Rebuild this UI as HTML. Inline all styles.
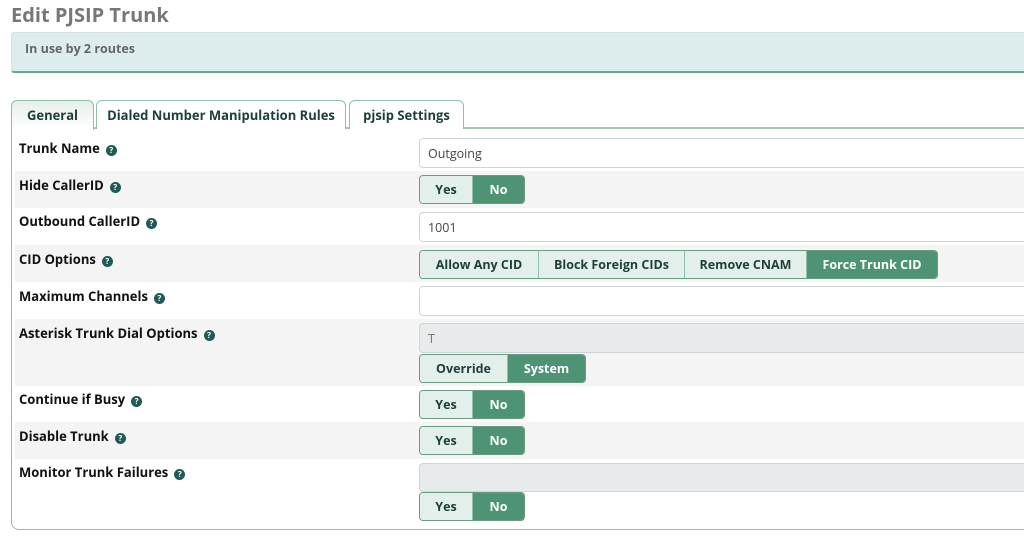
<!DOCTYPE html>
<html><head><meta charset="utf-8"><style>
*{box-sizing:border-box;margin:0;padding:0}
body{width:1024px;height:554px;overflow:hidden;background:#fff;font-family:"Open Sans","Liberation Sans",sans-serif;position:relative}
.a{position:absolute}
.title{left:11px;top:1px;font-size:20px;font-weight:bold;color:#777}
.alert{left:11px;top:32px;width:1020px;height:41px;background:#ddecec;border:1px solid #d6e2e2;border-bottom:2px solid #6aa988;border-radius:3px 0 0 3px}
.alert span{position:absolute;left:13px;top:7px;font-size:12.5px;font-weight:bold;color:#666}
.tab{top:100px;height:29px;border:1px solid #8fbfa6;border-bottom:none;border-radius:6px 6px 0 0;font-size:13px;font-weight:bold;color:#1d3e3a;text-align:center;line-height:29px;background:#fff}
.tab.act{background:linear-gradient(#e6efea,#fff);height:30px}
.line{left:93px;top:127px;width:940px;height:2px;background:#a3c9b5}
.panel{left:11px;top:127px;width:1030px;height:403px;border:1px solid #8fbfa6;border-top:none;border-radius:0 0 0 8px}
.row{left:15px;width:1010px}
.g{background:#f4f4f4}
.lbl{position:absolute;left:4px;top:4px;font-size:13px;font-weight:bold;color:#111}
.q{display:inline-block;width:11px;height:11px;border-radius:50%;background:#1f5a55;color:#fff;font-size:8px;line-height:11px;text-align:center;margin-left:6px;vertical-align:0}
.in{left:419px;width:620px;height:30px;border:1px solid #cfd4d6;border-radius:4px;background:#fff;font-size:12.5px;color:#444;padding:8px 8px;line-height:13px}
.in.d{background:#e8ebec}
.bg{display:flex;left:419px;height:29px;border:1px solid #6a9c82;border-radius:4px;overflow:hidden}
.bg div{font-size:12.5px;font-weight:bold;color:#1d3e3a;background:#e3efea;line-height:27px;text-align:center;border-right:1px solid #8fbfa6}
.bg div.on{background:#4e9373;color:#fff;border-right:none}
</style></head><body>
<div class="a title">Edit PJSIP Trunk</div>
<div class="a alert"><span>In use by 2 routes</span></div>
<div class="a line"></div>
<div class="a tab act" style="left:11px;width:83px">General</div>
<div class="a tab" style="left:96px;width:250px">Dialed Number Manipulation Rules</div>
<div class="a tab" style="left:349px;width:115px">pjsip Settings</div>
<div class="a panel"></div>

<div class="a row" style="top:135px;height:36px"><div class="lbl">Trunk Name<span class="q">?</span></div></div>
<div class="a in" style="top:138px">Outgoing</div>

<div class="a row g" style="top:171px;height:37px"><div class="lbl" style="top:5px">Hide CallerID<span class="q">?</span></div></div>
<div class="a bg" style="top:175px"><div style="width:53px">Yes</div><div class="on" style="width:51px">No</div></div>

<div class="a row" style="top:208px;height:37px"><div class="lbl">Outbound CallerID<span class="q">?</span></div></div>
<div class="a in" style="top:212px">1001</div>

<div class="a row g" style="top:245px;height:37px"><div class="lbl" style="top:5px">CID Options<span class="q">?</span></div></div>
<div class="a bg" style="top:250px"><div style="width:119px">Allow Any CID</div><div style="width:146px">Block Foreign CIDs</div><div style="width:122px">Remove CNAM</div><div class="on" style="width:130px">Force Trunk CID</div></div>

<div class="a row" style="top:282px;height:37px"><div class="lbl" style="top:5px">Maximum Channels<span class="q">?</span></div></div>
<div class="a in" style="top:286px"></div>

<div class="a row g" style="top:319px;height:67px"><div class="lbl" style="top:5px">Asterisk Trunk Dial Options<span class="q">?</span></div></div>
<div class="a in d" style="top:323px;height:30px;color:#777">T</div>
<div class="a bg" style="top:354px"><div style="width:88px">Override</div><div class="on" style="width:77px">System</div></div>

<div class="a row" style="top:386px;height:36px"><div class="lbl" style="top:4px">Continue if Busy<span class="q">?</span></div></div>
<div class="a bg" style="top:390px"><div style="width:53px">Yes</div><div class="on" style="width:51px">No</div></div>

<div class="a row g" style="top:422px;height:37px"><div class="lbl" style="top:5px">Disable Trunk<span class="q">?</span></div></div>
<div class="a bg" style="top:426px"><div style="width:53px">Yes</div><div class="on" style="width:51px">No</div></div>

<div class="a row" style="top:459px;height:66px"><div class="lbl" style="top:4px">Monitor Trunk Failures<span class="q">?</span></div></div>
<div class="a in d" style="top:463px;height:29px"></div>
<div class="a bg" style="top:492px"><div style="width:53px">Yes</div><div class="on" style="width:51px">No</div></div>
</body></html>
